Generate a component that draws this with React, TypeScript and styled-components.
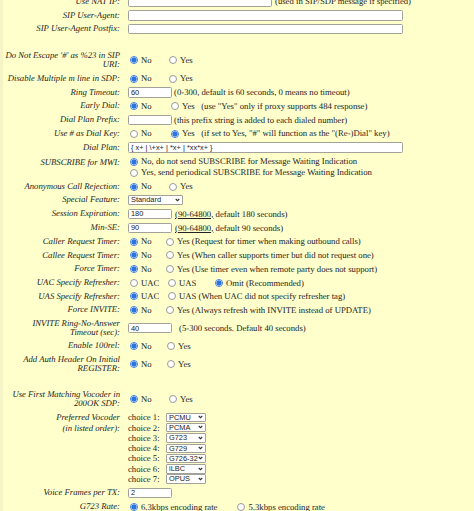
import React from "react";
import styled, { createGlobalStyle } from "styled-components";

const GlobalStyle = createGlobalStyle`
  html, body { margin: 0; padding: 0; background: #ffffcc; }
  body {
    font-family: "Liberation Serif", "Times New Roman", serif;
    font-size: 8.7px;
    color: #222;
    overflow: hidden;
    text-rendering: geometricPrecision;
  }
`;

const Page = styled.div`
  margin-top: -5.5px;
  border-left: 3px solid #f4f4c6;
  min-height: 530px;
`;

const Row = styled.div<{ $top?: boolean }>`
  display: grid;
  grid-template-columns: 117px 1fr;
  column-gap: 8px;
  align-items: ${(p) => (p.$top ? "start" : "center")};
  padding: 1.7px 0;
  line-height: 10.3px;
`;

const Spacer = styled.div<{ $h: number }>`
  height: ${(p) => p.$h}px;
`;

const Label = styled.div`
  font-style: italic;
  line-height: 9.6px;
  text-align: right;
  white-space: nowrap;
`;

const TopLabel = styled(Label)<{ $pt?: number }>`
  line-height: 10.3px;
  padding-top: ${(p) => p.$pt ?? 0}px;
`;

const Value = styled.div`
  display: flex;
  align-items: center;
  white-space: nowrap;
  min-height: 10.3px;
`;

const Stack = styled.div`
  display: flex;
  flex-direction: column;
`;

const StackLine = styled.div`
  display: flex;
  align-items: center;
  height: 11px;
`;

const Option = styled.label<{ $gap?: number }>`
  display: inline-flex;
  align-items: center;
  margin-right: ${(p) => p.$gap ?? 0}px;
`;

const Radio = styled.input.attrs({ type: "radio" })`
  appearance: none;
  -webkit-appearance: none;
  box-sizing: border-box;
  width: 8px;
  height: 8px;
  margin: 0 3px 0 2px;
  border-radius: 50%;
  border: 1px solid #9a9a9a;
  background: #fff;
  flex: none;
  &:checked {
    border-color: #3b7ee0;
    background: radial-gradient(circle at center, #2f74dc 0 2.3px, #ffffff 2.9px);
  }
`;

const TextInput = styled.input<{ $w: number }>`
  box-sizing: border-box;
  width: ${(p) => p.$w}px;
  height: 10.5px;
  margin: 0;
  padding: 0 2px;
  border: 1px solid #a2a29a;
  border-radius: 1.5px;
  background: #fff;
  font-family: "Liberation Sans", Arial, sans-serif;
  font-size: 7.4px;
  color: #222;
  outline: none;
  flex: none;
`;

const SelectWrap = styled.span`
  position: relative;
  display: inline-flex;
`;

const Select = styled.select<{ $w: number }>`
  appearance: none;
  -webkit-appearance: none;
  box-sizing: border-box;
  width: ${(p) => p.$w}px;
  height: 9.5px;
  margin: 0;
  padding: 0 0 0 2px;
  border: 1px solid #a2a29a;
  border-radius: 1px;
  background: #fff;
  font-family: "Liberation Sans", Arial, sans-serif;
  font-size: 7.4px;
  line-height: 7.5px;
  color: #222;
  outline: none;
`;

const Chevron = styled.svg`
  position: absolute;
  right: 3px;
  top: 2.5px;
  width: 5px;
  height: 4px;
  pointer-events: none;
`;

const Hint = styled.span<{ $ml?: number }>`
  margin-left: ${(p) => p.$ml ?? 3}px;
`;

const Under = styled.span`
  text-decoration: underline;
`;

const ChoiceGrid = styled.div`
  display: grid;
  grid-template-columns: auto auto;
  justify-content: start;
  column-gap: 6.4px;
  align-items: center;
  line-height: 10.3px;
`;

const ChoiceSel = styled.div`
  display: flex;
  align-items: center;
  height: 10.3px;
`;

type Opt = { text: React.ReactNode; checked?: boolean; gap?: number };

function Radios({ name, opts }: { name: string; opts: Opt[] }) {
  return (
    <>
      {opts.map((o, i) => (
        <Option key={i} $gap={o.gap}>
          <Radio name={name} defaultChecked={!!o.checked} />
          {o.text}
        </Option>
      ))}
    </>
  );
}

function DropDown({ w, value, options }: { w: number; value: string; options?: string[] }) {
  const list = options ?? [value];
  return (
    <SelectWrap>
      <Select $w={w} defaultValue={value}>
        {list.map((o) => (
          <option key={o}>{o}</option>
        ))}
      </Select>
      <Chevron viewBox="0 0 10 8">
        <path d="M1.5 2 L5 5.5 L8.5 2" fill="none" stroke="#333" strokeWidth="2.2" />
      </Chevron>
    </SelectWrap>
  );
}

const codecs = ["PCMU", "PCMA", "G723", "G729", "G726-32", "iLBC", "OPUS"];

export default function App() {
  return (
    <>
      <GlobalStyle />
      <Page>
        <Row>
          <Label>Use NAT IP:</Label>
          <Value>
            <TextInput $w={144} />
            <Hint>(used in SIP/SDP message if specified)</Hint>
          </Value>
        </Row>
        <Row>
          <Label>SIP User-Agent:</Label>
          <Value>
            <TextInput $w={275} />
          </Value>
        </Row>
        <Row>
          <Label>SIP User-Agent Postfix:</Label>
          <Value>
            <TextInput $w={275} />
          </Value>
        </Row>
        <Spacer $h={13} />
        <Row>
          <Label>
            Do Not Escape '#' as %23 in SIP
            <br />
            URI:
          </Label>
          <Value>
            <Radios name="esc" opts={[{ text: "No", checked: true, gap: 15.4 }, { text: "Yes" }]} />
          </Value>
        </Row>
        <Row>
          <Label>Disable Multiple m line in SDP:</Label>
          <Value>
            <Radios name="mline" opts={[{ text: "No", checked: true, gap: 15.4 }, { text: "Yes" }]} />
          </Value>
        </Row>
        <Row>
          <Label>Ring Timeout:</Label>
          <Value>
            <TextInput $w={44} defaultValue="60" />
            <Hint $ml={2}>(0-300, default is 60 seconds, 0 means no timeout)</Hint>
          </Value>
        </Row>
        <Row>
          <Label>Early Dial:</Label>
          <Value>
            <Radios name="early" opts={[{ text: "No", checked: true, gap: 17.4 }, { text: "Yes" }]} />
            <Hint $ml={6.5}>(use "Yes" only if proxy supports 484 response)</Hint>
          </Value>
        </Row>
        <Row>
          <Label>Dial Plan Prefix:</Label>
          <Value>
            <TextInput $w={44} />
            <Hint $ml={2}>(this prefix string is added to each dialed number)</Hint>
          </Value>
        </Row>
        <Row>
          <Label>Use # as Dial Key:</Label>
          <Value>
            <Radios name="hash" opts={[{ text: "No", gap: 17.4 }, { text: "Yes", checked: true }]} />
            <Hint $ml={6.5}>(if set to Yes, "#" will function as the "(Re-)Dial" key)</Hint>
          </Value>
        </Row>
        <Row>
          <Label>Dial Plan:</Label>
          <Value>
            <TextInput $w={275} defaultValue="{ x+ | \+x+ | *x+ | *xx*x+ }" />
          </Value>
        </Row>
        <Row $top>
          <TopLabel $pt={0.5}>SUBSCRIBE for MWI:</TopLabel>
          <Stack>
            <StackLine>
              <Radios
                name="mwi"
                opts={[{ text: "No, do not send SUBSCRIBE for Message Waiting Indication", checked: true }]}
              />
            </StackLine>
            <StackLine>
              <Radios name="mwi" opts={[{ text: "Yes, send periodical SUBSCRIBE for Message Waiting Indication" }]} />
            </StackLine>
          </Stack>
        </Row>
        <Row>
          <Label>Anonymous Call Rejection:</Label>
          <Value>
            <Radios name="anon" opts={[{ text: "No", checked: true, gap: 15.4 }, { text: "Yes" }]} />
          </Value>
        </Row>
        <Row>
          <Label>Special Feature:</Label>
          <Value>
            <DropDown w={55} value="Standard" />
          </Value>
        </Row>
        <Row>
          <Label>Session Expiration:</Label>
          <Value>
            <TextInput $w={44} defaultValue="180" />
            <Hint>
              <Under>(90-64800,</Under> default 180 seconds)
            </Hint>
          </Value>
        </Row>
        <Row>
          <Label>Min-SE:</Label>
          <Value>
            <TextInput $w={44} defaultValue="90" />
            <Hint>
              <Under>(90-64800,</Under> default 90 seconds)
            </Hint>
          </Value>
        </Row>
        <Row>
          <Label>Caller Request Timer:</Label>
          <Value>
            <Radios
              name="caller"
              opts={[{ text: "No", checked: true, gap: 12.4 }, { text: "Yes (Request for timer when making outbound calls)" }]}
            />
          </Value>
        </Row>
        <Row>
          <Label>Callee Request Timer:</Label>
          <Value>
            <Radios
              name="callee"
              opts={[
                { text: "No", checked: true, gap: 12.4 },
                { text: "Yes (When caller supports timer but did not request one)" },
              ]}
            />
          </Value>
        </Row>
        <Row>
          <Label>Force Timer:</Label>
          <Value>
            <Radios
              name="force"
              opts={[
                { text: "No", checked: true, gap: 12.4 },
                { text: "Yes (Use timer even when remote party does not support)" },
              ]}
            />
          </Value>
        </Row>
        <Row>
          <Label>UAC Specify Refresher:</Label>
          <Value>
            <Radios
              name="uac"
              opts={[
                { text: "UAC", gap: 6.6 },
                { text: "UAS", gap: 16.6 },
                { text: "Omit (Recommended)", checked: true },
              ]}
            />
          </Value>
        </Row>
        <Row>
          <Label>UAS Specify Refresher:</Label>
          <Value>
            <Radios
              name="uas"
              opts={[
                { text: "UAC", checked: true, gap: 6.6 },
                { text: "UAS (When UAC did not specify refresher tag)" },
              ]}
            />
          </Value>
        </Row>
        <Row>
          <Label>Force INVITE:</Label>
          <Value>
            <Radios
              name="finv"
              opts={[
                { text: "No", checked: true, gap: 12.4 },
                { text: "Yes (Always refresh with INVITE instead of UPDATE)" },
              ]}
            />
          </Value>
        </Row>
        <Row>
          <Label>
            INVITE Ring-No-Answer
            <br />
            Timeout (sec):
          </Label>
          <Value>
            <TextInput $w={44} defaultValue="40" />
            <Hint $ml={7}>(5-300 seconds. Default 40 seconds)</Hint>
          </Value>
        </Row>
        <Row>
          <Label>Enable 100rel:</Label>
          <Value>
            <Radios name="rel" opts={[{ text: "No", checked: true, gap: 13.4 }, { text: "Yes" }]} />
          </Value>
        </Row>
        <Row>
          <Label>
            Add Auth Header On Initial
            <br />
            REGISTER:
          </Label>
          <Value>
            <Radios name="auth" opts={[{ text: "No", checked: true, gap: 13.4 }, { text: "Yes" }]} />
          </Value>
        </Row>
        <Spacer $h={12.4} />
        <Row>
          <Label>
            Use First Matching Vocoder in
            <br />
            200OK SDP:
          </Label>
          <Value>
            <Radios name="first" opts={[{ text: "No", checked: true, gap: 15.4 }, { text: "Yes" }]} />
          </Value>
        </Row>
        <Row $top>
          <TopLabel>
            Preferred Vocoder
            <br />
            (in listed order):
          </TopLabel>
          <ChoiceGrid>
            {codecs.map((c, i) => (
              <React.Fragment key={c}>
                <span>choice {i + 1}:</span>
                <ChoiceSel>
                  <DropDown w={40} value={c} options={codecs} />
                </ChoiceSel>
              </React.Fragment>
            ))}
          </ChoiceGrid>
        </Row>
        <Row>
          <Label>Voice Frames per TX:</Label>
          <Value>
            <TextInput $w={44} defaultValue="2" />
          </Value>
        </Row>
        <Row>
          <Label>G723 Rate:</Label>
          <Value>
            <Radios
              name="g723"
              opts={[{ text: "6.3kbps encoding rate", checked: true, gap: 18 }, { text: "5.3kbps encoding rate" }]}
            />
          </Value>
        </Row>
      </Page>
    </>
  );
}
